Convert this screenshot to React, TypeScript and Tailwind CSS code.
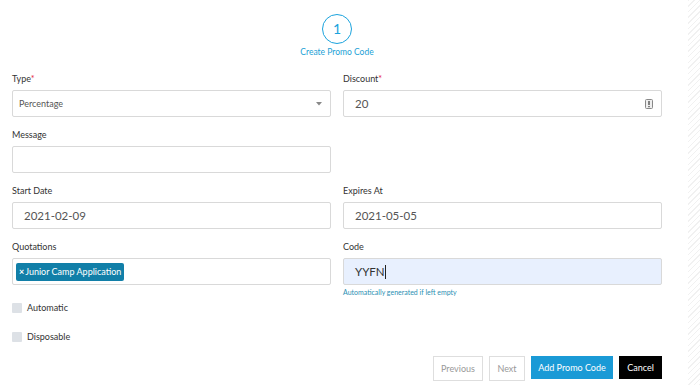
import React from "react";

const font = { fontFamily: "Lato, 'Open Sans', sans-serif" };

function Label({ text, required }: { text: string; required?: boolean }) {
  return (
    <div className="text-[9px] leading-[12px] text-[#333] mb-[5px]">
      {text}
      {required && <span className="text-[#e5243f]">*</span>}
    </div>
  );
}

function Box({ children, className = "" }: { children?: React.ReactNode; className?: string }) {
  return (
    <div
      className={`h-[27px] w-full rounded-[2px] border border-[#d9d9d9] flex items-center ${className}`}
    >
      {children}
    </div>
  );
}

export default function App() {
  return (
    <div className="w-[700px] h-[385px] bg-white flex overflow-hidden" style={font}>
      <div className="flex-1 pl-[12px]">
        <div className="w-[650px] flex flex-col items-center pt-[14px]">
          <div className="w-[30px] h-[30px] rounded-full border-[1.5px] border-[#1ba3dd] flex items-center justify-center text-[#1ba3dd] text-[14px] leading-none">
            1
          </div>
          <div className="mt-[3px] text-[8.5px] leading-[11px] text-[#1b9fd6]">Create Promo Code</div>
        </div>

        <div className="mt-[15px] grid grid-cols-[319px_319px] gap-x-[12px] gap-y-[12px] items-start">
          <div>
            <Label text="Type" required />
            <Box className="px-[6px] justify-between">
              <span className="text-[9px] text-[#555]">Percentage</span>
              <svg width="6" height="4" viewBox="0 0 6 4" className="mr-[2px]">
                <path d="M0 0 L6 0 L3 3.5 Z" fill="#888" />
              </svg>
            </Box>
          </div>
          <div>
            <Label text="Discount" required />
            <Box className="pl-[11px] pr-[8px] justify-between">
              <span className="text-[11.5px] text-[#555]">20</span>
              <svg width="8" height="10" viewBox="0 0 8 10">
                <rect x="0.5" y="0.5" width="7" height="9" rx="1" fill="#eee" stroke="#888" />
                <rect x="3.2" y="2" width="1.6" height="4" fill="#666" />
                <rect x="3.2" y="7" width="1.6" height="1.2" fill="#666" />
              </svg>
            </Box>
          </div>

          <div>
            <Label text="Message" />
            <Box />
          </div>
          <div />

          <div>
            <Label text="Start Date" />
            <Box className="px-[11px]">
              <span className="text-[11.5px] text-[#555]">2021-02-09</span>
            </Box>
          </div>
          <div>
            <Label text="Expires At" />
            <Box className="px-[11px]">
              <span className="text-[11.5px] text-[#555]">2021-05-05</span>
            </Box>
          </div>

          <div>
            <Label text="Quotations" />
            <Box className="px-[3px]">
              <span className="h-[18px] rounded-[2px] bg-[#117fa8] text-white text-[9px] flex items-center px-[3px] gap-[1px]">
                <span className="text-[9px] font-bold">×</span>
                <span>Junior Camp Application</span>
              </span>
            </Box>
          </div>
          <div>
            <Label text="Code" />
            <Box className="px-[11px] bg-[#e8f0fe] border-[#d2dbe6]">
              <span className="text-[11.5px] text-[#333]">YYFN</span>
              <span className="w-px h-[14px] bg-[#222]" />
            </Box>
            <div className="mt-[2px] text-[7px] leading-[10px] text-[#2a8fb3]">
              Automatically generated if left empty
            </div>
          </div>
        </div>

        <div className="mt-[6px] flex flex-col gap-[19px]">
          <div className="flex items-center gap-[5px]">
            <span className="w-[10px] h-[10px] bg-[#dde1e6] rounded-[1px]" />
            <span className="text-[9px] leading-[10px] text-[#333]">Automatic</span>
          </div>
          <div className="flex items-center gap-[5px]">
            <span className="w-[10px] h-[10px] bg-[#dde1e6] rounded-[1px]" />
            <span className="text-[9px] leading-[10px] text-[#333]">Disposable</span>
          </div>
        </div>

        <div className="mt-[14px] w-[650px] flex justify-end items-start gap-[6px]">
          <button className="w-[50px] h-[25px] border-[1.5px] border-[#dedede] text-[9px] text-[#999] bg-white">
            Previous
          </button>
          <button className="w-[36px] h-[25px] border-[1.5px] border-[#dedede] text-[9px] text-[#999] bg-white">
            Next
          </button>
          <button className="w-[82px] h-[23px] bg-[#1a9ad6] text-[9px] text-white">Add Promo Code</button>
          <button className="w-[43px] h-[23px] bg-black text-[9px] text-white">Cancel</button>
        </div>
      </div>
      <div className="w-[12px] h-full bg-[repeating-linear-gradient(135deg,#f1f1f1_0px,#f1f1f1_1px,#ffffff_1px,#ffffff_4px)]" />
    </div>
  );
}
